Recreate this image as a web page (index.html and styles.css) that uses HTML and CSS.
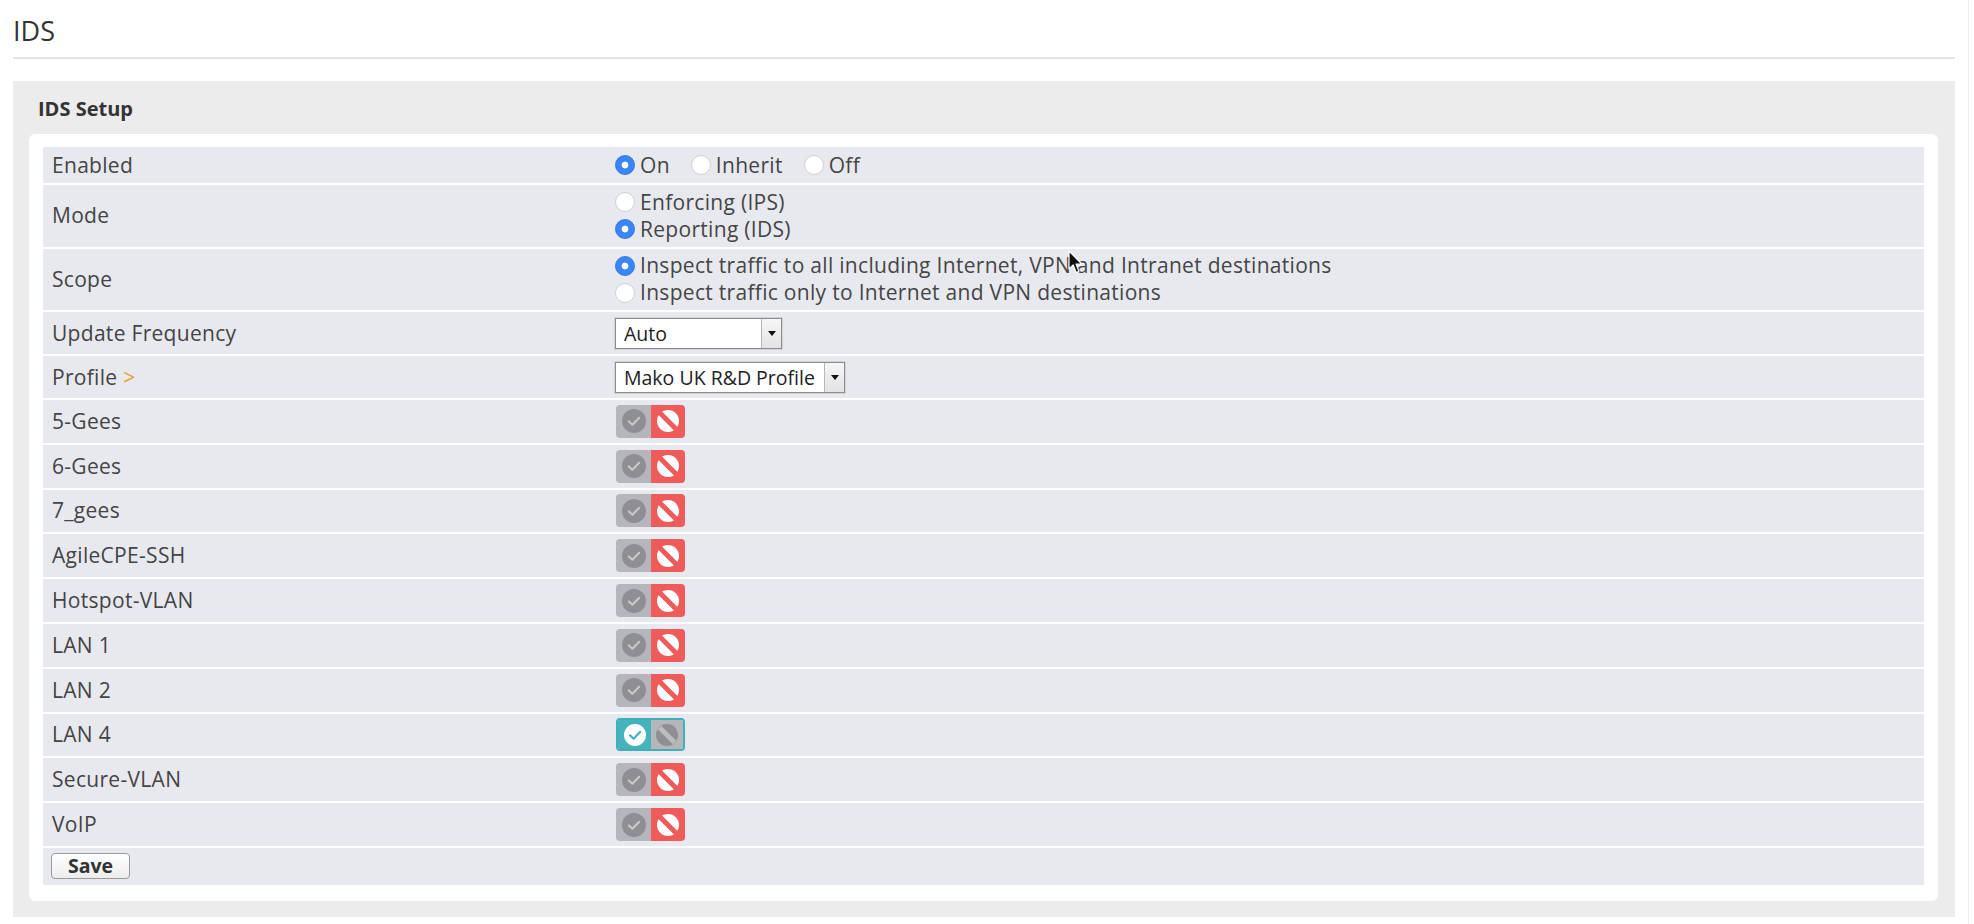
FILE: index.html
```html
<!DOCTYPE html>
<html lang="en">
<head>
<meta charset="utf-8">
<title>IDS</title>
<link rel="stylesheet" href="styles.css">
</head>
<body>
<div class="page">
  <h1 class="title">IDS</h1>
  <section class="panel">
    <h2 class="panel-title">IDS Setup</h2>
    <div class="card">
      <div class="rows">
        <div class="row row--single">
          <div class="label">Enabled</div>
          <div class="value inline">
            <label class="opt"><input type="radio" name="en" class="radio" checked>On</label>
            <label class="opt"><input type="radio" name="en" class="radio">Inherit</label>
            <label class="opt"><input type="radio" name="en" class="radio">Off</label>
          </div>
        </div>
        <div class="row row--double">
          <div class="label">Mode</div>
          <div class="value stack">
            <label class="opt"><input type="radio" name="mode" class="radio">Enforcing (IPS)</label>
            <label class="opt"><input type="radio" name="mode" class="radio" checked>Reporting (IDS)</label>
          </div>
        </div>
        <div class="row row--double">
          <div class="label">Scope</div>
          <div class="value stack">
            <label class="opt"><input type="radio" name="scope" class="radio" checked>Inspect traffic to all including Internet, VPN and Intranet destinations</label>
            <label class="opt"><input type="radio" name="scope" class="radio">Inspect traffic only to Internet and VPN destinations</label>
          </div>
        </div>
        <div class="row row--select">
          <div class="label">Update Frequency</div>
          <div class="value">
            <div class="select select--auto"><span class="select-text">Auto</span><span class="select-arrow"><span class="tri"></span></span></div>
          </div>
        </div>
        <div class="row row--select">
          <div class="label">Profile <span class="chev">&gt;</span></div>
          <div class="value">
            <div class="select select--profile"><span class="select-text">Mako UK R&amp;D Profile</span><span class="select-arrow"><span class="tri"></span></span></div>
          </div>
        </div>

        <div class="row row--toggle"><div class="label">5-Gees</div><div class="value"><span class="toggle">
          <span class="half half--off"><svg width="24" height="24" viewBox="0 0 24 24"><circle cx="12" cy="12" r="12" fill="#8f8f93"/><path d="M6.8 12.4 L10.4 15.8 L17.2 8.8" fill="none" stroke="#c9c9cc" stroke-width="2" stroke-linecap="round" stroke-linejoin="round"/></svg></span>
          <span class="half half--ban"><svg width="22" height="22" viewBox="0 0 22 22"><circle cx="11" cy="11" r="11" fill="#fff"/><path d="M2.5 2.5 L19.5 19.5" stroke="#ef5a5a" stroke-width="5"/></svg></span>
        </span></div></div>

        <div class="row row--toggle"><div class="label">6-Gees</div><div class="value"><span class="toggle">
          <span class="half half--off"><svg width="24" height="24" viewBox="0 0 24 24"><circle cx="12" cy="12" r="12" fill="#8f8f93"/><path d="M6.8 12.4 L10.4 15.8 L17.2 8.8" fill="none" stroke="#c9c9cc" stroke-width="2" stroke-linecap="round" stroke-linejoin="round"/></svg></span>
          <span class="half half--ban"><svg width="22" height="22" viewBox="0 0 22 22"><circle cx="11" cy="11" r="11" fill="#fff"/><path d="M2.5 2.5 L19.5 19.5" stroke="#ef5a5a" stroke-width="5"/></svg></span>
        </span></div></div>

        <div class="row row--toggle"><div class="label">7_gees</div><div class="value"><span class="toggle">
          <span class="half half--off"><svg width="24" height="24" viewBox="0 0 24 24"><circle cx="12" cy="12" r="12" fill="#8f8f93"/><path d="M6.8 12.4 L10.4 15.8 L17.2 8.8" fill="none" stroke="#c9c9cc" stroke-width="2" stroke-linecap="round" stroke-linejoin="round"/></svg></span>
          <span class="half half--ban"><svg width="22" height="22" viewBox="0 0 22 22"><circle cx="11" cy="11" r="11" fill="#fff"/><path d="M2.5 2.5 L19.5 19.5" stroke="#ef5a5a" stroke-width="5"/></svg></span>
        </span></div></div>

        <div class="row row--toggle"><div class="label">AgileCPE-SSH</div><div class="value"><span class="toggle">
          <span class="half half--off"><svg width="24" height="24" viewBox="0 0 24 24"><circle cx="12" cy="12" r="12" fill="#8f8f93"/><path d="M6.8 12.4 L10.4 15.8 L17.2 8.8" fill="none" stroke="#c9c9cc" stroke-width="2" stroke-linecap="round" stroke-linejoin="round"/></svg></span>
          <span class="half half--ban"><svg width="22" height="22" viewBox="0 0 22 22"><circle cx="11" cy="11" r="11" fill="#fff"/><path d="M2.5 2.5 L19.5 19.5" stroke="#ef5a5a" stroke-width="5"/></svg></span>
        </span></div></div>

        <div class="row row--toggle"><div class="label">Hotspot-VLAN</div><div class="value"><span class="toggle">
          <span class="half half--off"><svg width="24" height="24" viewBox="0 0 24 24"><circle cx="12" cy="12" r="12" fill="#8f8f93"/><path d="M6.8 12.4 L10.4 15.8 L17.2 8.8" fill="none" stroke="#c9c9cc" stroke-width="2" stroke-linecap="round" stroke-linejoin="round"/></svg></span>
          <span class="half half--ban"><svg width="22" height="22" viewBox="0 0 22 22"><circle cx="11" cy="11" r="11" fill="#fff"/><path d="M2.5 2.5 L19.5 19.5" stroke="#ef5a5a" stroke-width="5"/></svg></span>
        </span></div></div>

        <div class="row row--toggle"><div class="label">LAN 1</div><div class="value"><span class="toggle">
          <span class="half half--off"><svg width="24" height="24" viewBox="0 0 24 24"><circle cx="12" cy="12" r="12" fill="#8f8f93"/><path d="M6.8 12.4 L10.4 15.8 L17.2 8.8" fill="none" stroke="#c9c9cc" stroke-width="2" stroke-linecap="round" stroke-linejoin="round"/></svg></span>
          <span class="half half--ban"><svg width="22" height="22" viewBox="0 0 22 22"><circle cx="11" cy="11" r="11" fill="#fff"/><path d="M2.5 2.5 L19.5 19.5" stroke="#ef5a5a" stroke-width="5"/></svg></span>
        </span></div></div>

        <div class="row row--toggle"><div class="label">LAN 2</div><div class="value"><span class="toggle">
          <span class="half half--off"><svg width="24" height="24" viewBox="0 0 24 24"><circle cx="12" cy="12" r="12" fill="#8f8f93"/><path d="M6.8 12.4 L10.4 15.8 L17.2 8.8" fill="none" stroke="#c9c9cc" stroke-width="2" stroke-linecap="round" stroke-linejoin="round"/></svg></span>
          <span class="half half--ban"><svg width="22" height="22" viewBox="0 0 22 22"><circle cx="11" cy="11" r="11" fill="#fff"/><path d="M2.5 2.5 L19.5 19.5" stroke="#ef5a5a" stroke-width="5"/></svg></span>
        </span></div></div>

        <div class="row row--toggle"><div class="label">LAN 4</div><div class="value"><span class="toggle toggle--on">
          <span class="half half--check"><svg width="22" height="22" viewBox="0 0 22 22"><circle cx="11" cy="11" r="11" fill="#fff"/><path d="M6 11.4 L9.6 14.8 L16.2 7.8" fill="none" stroke="#45b3bb" stroke-width="2.2" stroke-linecap="round" stroke-linejoin="round"/></svg></span>
          <span class="half half--off"><svg width="22" height="22" viewBox="0 0 22 22"><circle cx="11" cy="11" r="11" fill="#8f8f93"/><path d="M3.5 3.5 L18.5 18.5" stroke="#bcbcbf" stroke-width="5"/></svg></span>
        </span></div></div>

        <div class="row row--toggle"><div class="label">Secure-VLAN</div><div class="value"><span class="toggle">
          <span class="half half--off"><svg width="24" height="24" viewBox="0 0 24 24"><circle cx="12" cy="12" r="12" fill="#8f8f93"/><path d="M6.8 12.4 L10.4 15.8 L17.2 8.8" fill="none" stroke="#c9c9cc" stroke-width="2" stroke-linecap="round" stroke-linejoin="round"/></svg></span>
          <span class="half half--ban"><svg width="22" height="22" viewBox="0 0 22 22"><circle cx="11" cy="11" r="11" fill="#fff"/><path d="M2.5 2.5 L19.5 19.5" stroke="#ef5a5a" stroke-width="5"/></svg></span>
        </span></div></div>

        <div class="row row--toggle"><div class="label">VoIP</div><div class="value"><span class="toggle">
          <span class="half half--off"><svg width="24" height="24" viewBox="0 0 24 24"><circle cx="12" cy="12" r="12" fill="#8f8f93"/><path d="M6.8 12.4 L10.4 15.8 L17.2 8.8" fill="none" stroke="#c9c9cc" stroke-width="2" stroke-linecap="round" stroke-linejoin="round"/></svg></span>
          <span class="half half--ban"><svg width="22" height="22" viewBox="0 0 22 22"><circle cx="11" cy="11" r="11" fill="#fff"/><path d="M2.5 2.5 L19.5 19.5" stroke="#ef5a5a" stroke-width="5"/></svg></span>
        </span></div></div>

        <div class="row row--action">
          <button class="btn" type="button">Save</button>
        </div>
      </div>
    </div>
  </section>
</div>
<svg class="cursor" width="16" height="26" viewBox="0 0 16 26"><path d="M1 1 L1 19 L5.2 15 L8.2 22.5 L11 21.3 L8 14 L13.8 14 Z" fill="#111" stroke="#fff" stroke-width="1.2" stroke-linejoin="round"/></svg>
</body>
</html>
```

FILE: styles.css
```css
html, body {
  margin: 0;
  padding: 0;
  background: #ffffff;
}

body {
  position: relative;
  font-family: "Open Sans", "Noto Sans", "DejaVu Sans", sans-serif;
  color: #444;
}

.page {
  width: 1969px;
  box-sizing: border-box;
  min-height: 924px;
  padding: 0 13px;
  border-right: 1px solid #efefef;
}

.title {
  margin: 0;
  padding: 15px 0 10px 0;
  font-size: 27px;
  line-height: 32px;
  font-weight: 400;
  color: #333;
  border-bottom: 2px solid #e2e2e2;
}

.panel {
  margin-top: 22px;
  background: #ececec;
  padding: 16px 17px 16px 16px;
}

.panel-title {
  margin: 0 0 13px 9px;
  font-size: 20px;
  line-height: 24px;
  font-weight: 700;
  color: #333;
}

.card {
  background: #ffffff;
  border-radius: 6px;
  padding: 13px 14px 16px 14px;
}

.rows {
  display: flex;
  flex-direction: column;
  gap: 2px;
}

.row {
  display: grid;
  grid-template-columns: 572px 1fr;
  align-items: center;
  background: #e8e9ef;
  font-size: 21px;
  letter-spacing: 0.3px;
  line-height: 27px;
}

.row--single { height: 36px; }
.row--double { height: 61.5px; }
.row--select { height: 42px; }
.row--toggle { height: 42.8px; }
.row--action { height: 37px; display: flex; }

.label {
  padding-left: 9px;
  color: #444;
}

.chev {
  color: #dea236;
}

.value {
  display: flex;
  align-items: center;
}

.value.stack {
  flex-direction: column;
  align-items: flex-start;
}

.opt {
  display: inline-flex;
  align-items: center;
  gap: 5px;
  color: #454545;
  white-space: nowrap;
}

.inline .opt {
  margin-right: 21px;
}

.radio {
  -webkit-appearance: none;
  appearance: none;
  margin: 0;
  width: 20px;
  height: 20px;
  border-radius: 50%;
  border: 1px solid #cfcfd3;
  background: #ffffff;
  box-sizing: border-box;
  flex: none;
}

.radio:checked {
  border-color: #2e78ec;
  background: radial-gradient(circle, #ffffff 0 3px, #3a86f6 3.8px);
}

.select {
  display: inline-flex;
  height: 31px;
  box-sizing: border-box;
  border: 1px solid #8c8c8c;
  box-shadow: 0 0 0 1px #d4d4d6;
  background: #ffffff;
  font-size: 19.5px;
  letter-spacing: 0;
  color: #222;
}

.select--auto { width: 167px; }
.select--profile { width: 230px; }

.select-text {
  flex: 1;
  padding-left: 8px;
  line-height: 29px;
  white-space: nowrap;
  overflow: hidden;
}

.select-arrow {
  width: 19px;
  border-left: 1px solid #b7b7b7;
  background: linear-gradient(#f6f6f6, #e3e3e3);
  display: flex;
  align-items: center;
  justify-content: center;
}

.tri {
  width: 0;
  height: 0;
  border-left: 4px solid transparent;
  border-right: 4px solid transparent;
  border-top: 5px solid #111;
}

.toggle {
  display: inline-flex;
  height: 33px;
  width: 69px;
  margin-left: 1px;
  border-radius: 4px;
  overflow: hidden;
  box-sizing: border-box;
}

.half {
  display: flex;
  align-items: center;
  justify-content: center;
  height: 100%;
}

.half:first-child { width: 35px; }
.half:last-child { width: 34px; }

.half--off { background: #b6b6ba; }
.half--ban { background: #ef5a5a; }
.half--check { background: #45b3bb; }

.toggle--on {
  border: 2px solid #3fb0b8;
}

.toggle--on .half:first-child { width: 33px; }
.toggle--on .half:last-child { width: 32px; }

.btn {
  margin-left: 8px;
  width: 79px;
  height: 26px;
  padding: 0;
  border: 1px solid #9a9a9a;
  border-radius: 4px;
  background: linear-gradient(#ffffff, #ececec);
  font-family: "Open Sans", "Noto Sans", sans-serif;
  font-size: 19.5px;
  font-weight: 700;
  line-height: 24px;
  color: #333;
}

.cursor {
  position: absolute;
  left: 1068px;
  top: 250px;
}
```
